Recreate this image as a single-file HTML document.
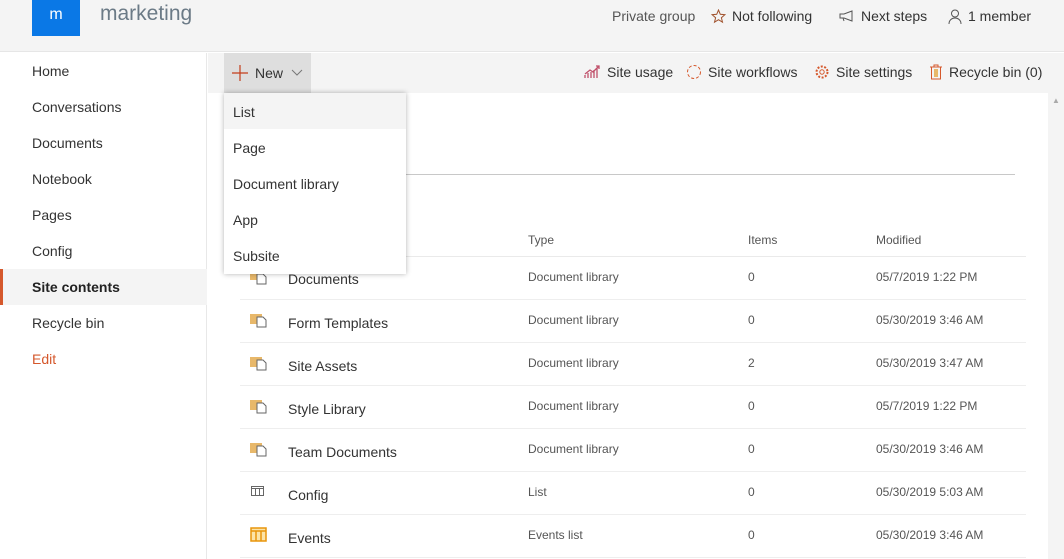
<!DOCTYPE html>
<html><head><style>
*{margin:0;padding:0;box-sizing:border-box}
body{width:1064px;height:559px;overflow:hidden;background:#fff;font-family:"Liberation Sans",sans-serif;color:#333;position:relative}
.abs{position:absolute}
#hdr{left:0;top:0;width:1064px;height:52px;background:#f4f4f4;border-bottom:1px solid #e6e6e6}
#logo{left:32px;top:0;width:48px;height:36px;background:#0a78e6;color:#fff;font-size:16px;text-align:center;line-height:30px}
#title{left:100px;top:2px;font-size:21px;color:#6b7a86}
.hl{top:8px;font-size:14px;color:#333;display:flex;align-items:center;gap:6px}
#nav{left:0;top:53px;width:207px;height:506px;border-right:1px solid #e8e8e8;background:#fff}
.ni{position:absolute;left:0;width:207px;height:36px;line-height:36px;padding-left:32px;font-size:14px;color:#333}
#cmd{left:208px;top:53px;width:856px;height:40px;background:#f4f4f4}
.ci{top:64px;font-size:14px;color:#333;display:flex;align-items:center;gap:6px}
#newb{left:224px;top:53px;width:87px;height:40px;background:#dedede}
#dd{left:224px;top:93px;width:182px;height:181px;background:#fff;box-shadow:0 0 5px rgba(0,0,0,.3)}
.di{height:36px;line-height:38px;padding-left:9px;font-size:14px}
.row{position:absolute;left:240px;width:786px;border-bottom:1px solid #eeeeee;height:43px}
.nm{position:absolute;left:48px;top:15px;font-size:14px;color:#333}
.tp{position:absolute;left:288px;top:13px;font-size:12px;color:#555}
.it{position:absolute;left:508px;top:13px;font-size:12px;color:#555}
.md{position:absolute;left:636px;top:13px;font-size:12px;color:#555}
.ic{position:absolute;left:10px;top:12px}
</style></head><body>
<div id="hdr" class="abs"></div>
<div id="logo" class="abs">m</div>
<div id="title" class="abs">marketing</div>
<div class="abs hl" style="left:612px;color:#555">Private group</div>
<div class="abs hl" style="left:711px"><svg width="15" height="15"><path d="M7.5 1l1.8 4.3 4.6.4-3.5 3 1.1 4.5-4-2.5-4 2.5 1.1-4.5-3.5-3 4.6-.4z" fill="none" stroke="#a0522d"/></svg>Not following</div>
<div class="abs hl" style="left:839px"><svg width="16" height="12"><path d="M1 4h4l8-3v10l-8-3H1z M4 8l1 3" fill="none" stroke="#555"/></svg>Next steps</div>
<div class="abs hl" style="left:948px"><svg width="14" height="15"><circle cx="7" cy="4.5" r="3.5" fill="none" stroke="#555"/><path d="M1 15c0-4 3-6 6-6s6 2 6 6" fill="none" stroke="#555"/></svg>1 member</div>

<div id="nav" class="abs">
<div class="ni" style="top:0">Home</div>
<div class="ni" style="top:36px">Conversations</div>
<div class="ni" style="top:72px">Documents</div>
<div class="ni" style="top:108px">Notebook</div>
<div class="ni" style="top:144px">Pages</div>
<div class="ni" style="top:180px">Config</div>
<div class="ni" style="top:216px;background:#f4f4f4;border-left:3px solid #d5582c;padding-left:29px;font-weight:bold;color:#222">Site contents</div>
<div class="ni" style="top:252px">Recycle bin</div>
<div class="ni" style="top:288px;color:#d5582c">Edit</div>
</div>

<div id="cmd" class="abs"></div>
<div id="newb" class="abs"><svg style="position:absolute;left:8px;top:12px" width="16" height="16"><path d="M8 0v16M0 8h16" stroke="#c43e1c" stroke-width="1.2"/></svg><span style="position:absolute;left:31px;top:12px;font-size:14px">New</span><svg style="position:absolute;left:67px;top:16px" width="12" height="8"><path d="M1 1l5 5 5-5" fill="none" stroke="#777"/></svg></div>
<div class="abs ci" style="left:584px"><svg width="17" height="14"><path d="M1 13V10M4 13V8M7 13V7M10 13V5M13 13V3M1 9l5-4 3 2 6-6M12 1h3v3" fill="none" stroke="#c0506a" stroke-width="1.3"/></svg>Site usage</div>
<div class="abs ci" style="left:686px"><svg width="16" height="16"><circle cx="8" cy="8" r="6.5" fill="none" stroke="#d5582c" stroke-dasharray="3 2"/></svg>Site workflows</div>
<div class="abs ci" style="left:814px"><svg width="16" height="16"><circle cx="8" cy="8" r="5.5" fill="none" stroke="#d5582c" stroke-width="2" stroke-dasharray="2 1.5"/><circle cx="8" cy="8" r="2.2" fill="none" stroke="#d5582c"/></svg>Site settings</div>
<div class="abs ci" style="left:929px"><svg width="14" height="16"><path d="M1 3h12M5 3V1h4v2M2.5 3v12h9V3" fill="none" stroke="#d5582c"/><rect x="5" y="5" width="4" height="8" fill="#e8b86a"/></svg>Recycle bin (0)</div>

<div class="abs" style="left:1048px;top:93px;width:16px;height:466px;background:#f4f4f4"></div>
<div class="abs" style="left:1052px;top:96px;font-size:8px;color:#aaa">▲</div>

<div class="abs" style="left:406px;top:174px;width:609px;height:1px;background:#c8c8c8"></div>

<div class="abs" style="left:528px;top:233px;font-size:12px;color:#555">Type</div>
<div class="abs" style="left:748px;top:233px;font-size:12px;color:#555">Items</div>
<div class="abs" style="left:876px;top:233px;font-size:12px;color:#555">Modified</div>
<div class="abs" style="left:240px;top:256px;width:786px;height:1px;background:#eaeaea"></div>

<div class="row" style="top:257px"><svg class="ic" width="18" height="16"><rect x="0" y="3" width="10" height="8" fill="#e8b86a"/><path d="M7 5h6l3 3v7H7z" fill="#fff" stroke="#666"/></svg><span class="nm" style="top:14px">Documents</span><span class="tp">Document library</span><span class="it">0</span><span class="md">05/7/2019 1:22 PM</span></div>
<div class="row" style="top:300px"><svg class="ic" width="18" height="16"><rect x="0" y="2" width="12" height="10" fill="#e8b86a"/><path d="M7 5h6l3 3v7H7z" fill="#fff" stroke="#666"/></svg><span class="nm">Form Templates</span><span class="tp">Document library</span><span class="it">0</span><span class="md">05/30/2019 3:46 AM</span></div>
<div class="row" style="top:343px"><svg class="ic" width="18" height="16"><rect x="0" y="2" width="12" height="10" fill="#e8b86a"/><path d="M7 5h6l3 3v7H7z" fill="#fff" stroke="#666"/></svg><span class="nm">Site Assets</span><span class="tp">Document library</span><span class="it">2</span><span class="md">05/30/2019 3:47 AM</span></div>
<div class="row" style="top:386px"><svg class="ic" width="18" height="16"><rect x="0" y="2" width="12" height="10" fill="#e8b86a"/><path d="M7 5h6l3 3v7H7z" fill="#fff" stroke="#666"/></svg><span class="nm">Style Library</span><span class="tp">Document library</span><span class="it">0</span><span class="md">05/7/2019 1:22 PM</span></div>
<div class="row" style="top:429px"><svg class="ic" width="18" height="16"><rect x="0" y="2" width="12" height="10" fill="#e8b86a"/><path d="M7 5h6l3 3v7H7z" fill="#fff" stroke="#666"/></svg><span class="nm">Team Documents</span><span class="tp">Document library</span><span class="it">0</span><span class="md">05/30/2019 3:46 AM</span></div>
<div class="row" style="top:472px"><svg class="ic" width="16" height="14"><rect x="1.5" y="2.5" width="12" height="9" fill="none" stroke="#666"/><path d="M1.5 4.5h12M5.5 4.5v7M9.5 4.5v7" stroke="#666"/></svg><span class="nm">Config</span><span class="tp">List</span><span class="it">0</span><span class="md">05/30/2019 5:03 AM</span></div>
<div class="row" style="top:515px"><svg class="ic" width="18" height="16"><rect x="1" y="1" width="15" height="13" fill="#fce4a8" stroke="#e8950c" stroke-width="1.5"/><path d="M1 4h15M6 4v10M11 4v10" stroke="#e8950c" stroke-width="1.5"/></svg><span class="nm">Events</span><span class="tp">Events list</span><span class="it">0</span><span class="md">05/30/2019 3:46 AM</span></div>

<div id="dd" class="abs">
<div class="di" style="background:#f4f4f4">List</div>
<div class="di">Page</div>
<div class="di">Document library</div>
<div class="di">App</div>
<div class="di">Subsite</div>
</div>
</body></html>
